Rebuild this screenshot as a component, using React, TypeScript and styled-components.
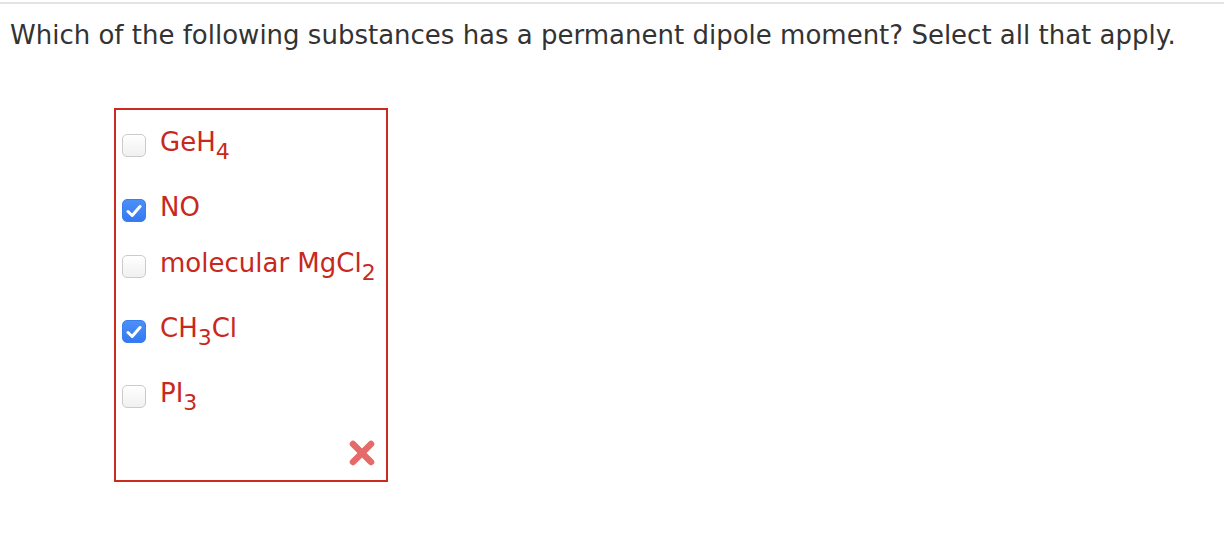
import React from 'react';
import styled, { createGlobalStyle } from 'styled-components';

const GlobalStyle = createGlobalStyle`
  body {
    margin: 0;
    background: #ffffff;
    font-family: 'DejaVu Sans', Verdana, sans-serif;
  }
`;

const Page = styled.div`
  width: 1224px;
  height: 544px;
  padding-top: 2px;
  box-sizing: border-box;
`;

const TopRule = styled.div`
  height: 2px;
  background: #e3e3e3;
`;

const Question = styled.p`
  margin: 16px 0 0 10px;
  font-size: 26px;
  line-height: 30px;
  color: #333333;
`;

const AnswerBox = styled.div`
  margin: 58px 0 0 114px;
  width: 274px;
  height: 374px;
  box-sizing: border-box;
  border: 2px solid #cb2b1f;
  padding: 24px 0 0 6px;
  display: flex;
  flex-direction: column;
  gap: 33px;
  position: relative;
`;

const Row = styled.label<{ $sub?: boolean }>`
  display: flex;
  align-items: center;
  gap: 14px;
  height: 23px;
  padding-bottom: ${(p) => (p.$sub ? '9px' : '0')};
`;

const Box = styled.span<{ $checked?: boolean }>`
  width: 24px;
  height: 23px;
  box-sizing: border-box;
  border-radius: 5px;
  flex-shrink: 0;
  display: flex;
  align-items: center;
  justify-content: center;
  border: 1px solid ${(p) => (p.$checked ? '#3a7ff0' : '#cbcbcb')};
  background: ${(p) =>
    p.$checked
      ? 'linear-gradient(#4b8ff8, #3579f2)'
      : 'linear-gradient(#ffffff, #f0f0f0)'};
`;

const Label = styled.span`
  font-size: 26px;
  line-height: 23px;
  color: #c8281d;
  white-space: nowrap;
  position: relative;
  top: -3px;
`;

const Sub = styled.sub`
  font-size: 22px;
  vertical-align: -8px;
  line-height: 0;
`;

const Wrong = styled.svg`
  position: absolute;
  right: 10px;
  bottom: 13px;
`;

const Check = () => (
  <svg width="16" height="14" viewBox="0 0 16 14">
    <path
      d="M2 7.5 L6.2 11.5 L14 2.5"
      fill="none"
      stroke="#ffffff"
      strokeWidth="3"
      strokeLinecap="round"
      strokeLinejoin="round"
    />
  </svg>
);

type Choice = { text: React.ReactNode; checked: boolean; sub: boolean };

const choices: Choice[] = [
  { text: <>GeH<Sub>4</Sub></>, checked: false, sub: true },
  { text: <>NO</>, checked: true, sub: false },
  { text: <>molecular MgCl<Sub>2</Sub></>, checked: false, sub: true },
  { text: <>CH<Sub>3</Sub>Cl</>, checked: true, sub: true },
  { text: <>PI<Sub>3</Sub></>, checked: false, sub: true },
];

const App: React.FC = () => {
  return (
    <>
      <GlobalStyle />
      <Page>
        <TopRule />
        <Question>
          Which of the following substances has a permanent dipole moment? Select all that apply.
        </Question>
        <AnswerBox>
          {choices.map((c, i) => (
            <Row key={i} $sub={c.sub}>
              <Box $checked={c.checked}>{c.checked && <Check />}</Box>
              <Label>{c.text}</Label>
            </Row>
          ))}
          <Wrong width="28" height="28" viewBox="0 0 28 28">
            <path
              d="M5 5 L23 23 M23 5 L5 23"
              stroke="#e35a5a"
              strokeWidth="6.5"
              strokeLinecap="round"
              opacity="0.9"
            />
          </Wrong>
        </AnswerBox>
      </Page>
    </>
  );
};

export default App;
